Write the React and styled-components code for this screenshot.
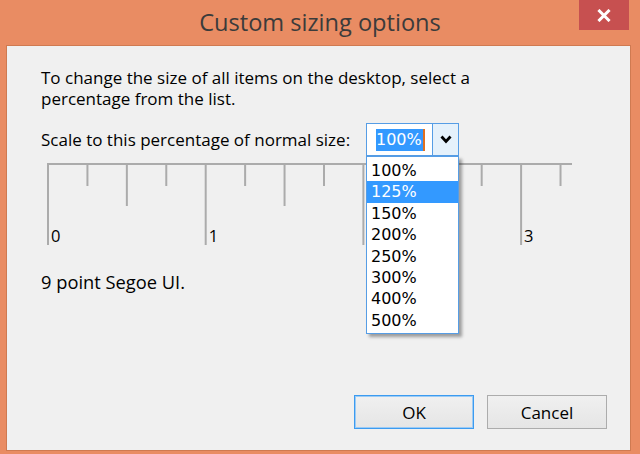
import React from "react";
import styled, { createGlobalStyle } from "styled-components";

const Global = createGlobalStyle`
  html, body { margin: 0; padding: 0; }
  body { background: #E98C63; width: 640px; height: 454px; overflow: hidden; }
  * { box-sizing: border-box; }
`;

const Frame = styled.div`
  width: 640px;
  height: 454px;
  background: #E98C63;
  display: flex;
  flex-direction: column;
  font-family: "Open Sans", "Noto Sans", sans-serif;
`;

const TitleBar = styled.div`
  height: 46px;
  display: grid;
  grid-template-columns: 1fr auto 1fr;
  align-items: start;
`;

const Title = styled.div`
  grid-column: 2;
  padding-top: 6px;
  font-size: 23.6px;
  line-height: 32px;
  color: #3b3b3b;
`;

const CloseButton = styled.div`
  grid-column: 3;
  justify-self: end;
  margin-right: 11px;
  width: 50px;
  height: 30px;
  background: #C75050;
  display: flex;
  align-items: center;
  justify-content: center;
`;

const Client = styled.div`
  flex: 1;
  margin: 0 10px 4px 7px;
  background: #F0F0F0;
  box-shadow: 0 0 0 1px rgba(190, 110, 70, 0.6);
  padding: 21px 23px 21px 34px;
  display: flex;
  flex-direction: column;
  color: #000;
  font-size: 17px;
`;

const Intro = styled.p`
  margin: 0;
  line-height: 21px;
  width: 480px;
`;

const ScaleRow = styled.div`
  margin-top: 14px;
  display: flex;
  align-items: center;
  height: 33px;
`;

const Label = styled.span`
  width: 325px;
  line-height: 21px;
  white-space: nowrap;
`;

const Combo = styled.div`
  position: relative;
  width: 93px;
  height: 33px;
  border: 1px solid #569DE5;
  display: flex;
  background: #fff;
`;

const Field = styled.div`
  flex: 1;
  display: flex;
  align-items: center;
  padding-left: 9px;
`;

const Selected = styled.span`
  font-family: "DejaVu Sans", sans-serif;
  font-size: 16px;
  line-height: 22px;
  background: #3399FF;
  color: #fff;
  padding-right: 1px;
  border-right: 2px solid #E07020;
`;

const DropButton = styled.div`
  width: 26px;
  background: #E5F1FB;
  border-left: 1px solid #569DE5;
  display: flex;
  align-items: center;
  justify-content: center;
`;

const List = styled.ul`
  position: absolute;
  top: 32px;
  left: -1px;
  width: 93px;
  margin: 0;
  padding: 3px 0 2px;
  list-style: none;
  background: #fff;
  border: 1px solid #569DE5;
  box-shadow: 3px 3px 3px rgba(0, 0, 0, 0.35);
  z-index: 2;
`;

const Item = styled.li`
  height: 21.4px;
  line-height: 21.4px;
  padding-left: 4px;
  font-family: "DejaVu Sans", sans-serif;
  font-size: 16px;
  background: ${(p) => (p.$active ? "#3399FF" : "transparent")};
  color: ${(p) => (p.$active ? "#fff" : "#000")};
`;

const RulerWrap = styled.div`
  margin-top: 7px;
  height: 84px;
`;

const Caption = styled.div`
  margin-top: 24px;
  line-height: 22px;
  font-size: 18.3px;
`;

const Spacer = styled.div`
  flex: 1;
`;

const ButtonRow = styled.div`
  display: flex;
  justify-content: flex-end;
  gap: 13px;
`;

const Button = styled.div`
  width: 120px;
  height: 34px;
  display: flex;
  align-items: center;
  justify-content: center;
  font-size: 17px;
  background: linear-gradient(#F0F0F0, #E5E5E5);
  border: 1px solid ${(p) => (p.$focused ? "#3C9BF0" : "#ACACAC")};
  box-shadow: ${(p) => (p.$focused ? "inset 0 0 0 1px #9CCBF5" : "none")};
`;

const percents = ["100%", "125%", "150%", "200%", "250%", "300%", "400%", "500%"];

function Ruler() {
  const x0 = 7;
  const inch = 157.7;
  const q = inch / 4;
  const ticks = [];
  for (let i = 0; i <= 13; i++) {
    const x = x0 + q * i;
    const len = i % 4 === 0 ? 82 : i % 2 === 0 ? 43 : 23;
    ticks.push(
      <line key={i} x1={x} y1={1} x2={x} y2={len} stroke="#ABABAB" strokeWidth="2" />
    );
  }
  const labels = [0, 1, 3];
  return (
    <svg width="532" height="84" viewBox="0 0 532 84">
      <line x1={x0 - 1} y1={1} x2={531} y2={1} stroke="#ABABAB" strokeWidth="2" />
      {ticks}
      {labels.map((n) => (
        <text
          key={n}
          x={x0 + inch * n + 3}
          y={79}
          fontFamily="'Open Sans', sans-serif"
          fontSize="16.5"
          fill="#000"
        >
          {n}
        </text>
      ))}
    </svg>
  );
}

export default function App() {
  return (
    <>
      <Global />
      <Frame>
        <TitleBar>
          <Title>Custom sizing options</Title>
          <CloseButton>
            <svg width="14" height="13" viewBox="0 0 14 13">
              <path d="M2.5 2 L11.5 11 M11.5 2 L2.5 11" stroke="#fff" strokeWidth="3" strokeLinecap="square" />
            </svg>
          </CloseButton>
        </TitleBar>
        <Client>
          <Intro>
            To change the size of all items on the desktop, select a percentage from the list.
          </Intro>
          <ScaleRow>
            <Label>Scale to this percentage of normal size:</Label>
            <Combo>
              <Field>
                <Selected>100%</Selected>
              </Field>
              <DropButton>
                <svg width="12" height="9" viewBox="0 0 12 9">
                  <path d="M1.5 1.5 L6 6.5 L10.5 1.5" stroke="#000" strokeWidth="2.8" fill="none" />
                </svg>
              </DropButton>
              <List>
                {percents.map((p) => (
                  <Item key={p} $active={p === "125%"}>
                    {p}
                  </Item>
                ))}
              </List>
            </Combo>
          </ScaleRow>
          <RulerWrap>
            <Ruler />
          </RulerWrap>
          <Caption>9 point Segoe UI.</Caption>
          <Spacer />
          <ButtonRow>
            <Button $focused>OK</Button>
            <Button>Cancel</Button>
          </ButtonRow>
        </Client>
      </Frame>
    </>
  );
}
